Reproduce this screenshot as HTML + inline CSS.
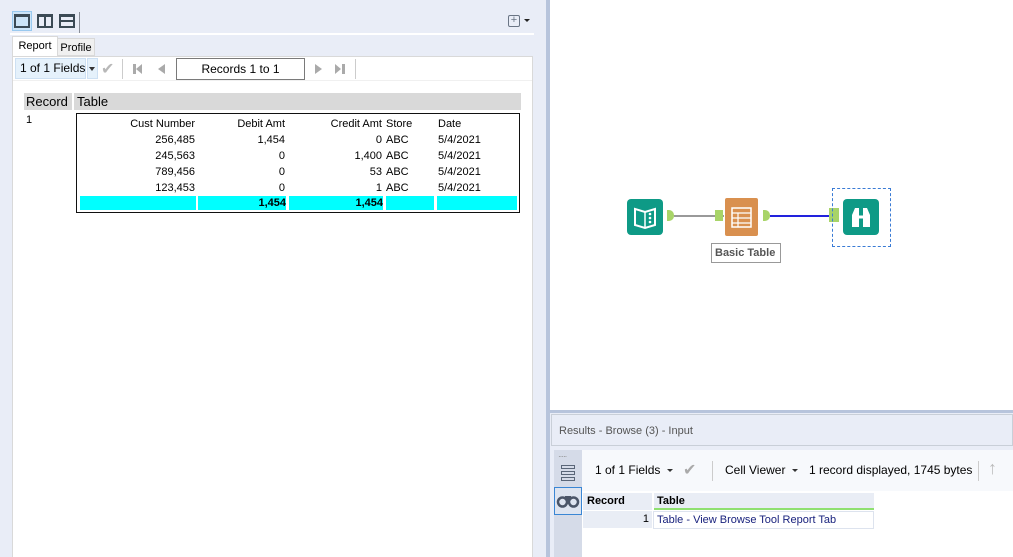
<!DOCTYPE html>
<html style="overflow:hidden;width:1013px;height:557px"><head><style>
body{margin:0;width:1013px;height:557px;overflow:hidden;background:#e9edf7;font-family:"Liberation Sans",sans-serif;font-size:12px;position:relative}
.a{position:absolute;white-space:nowrap}
.r{text-align:right}
</style></head><body>
<div class="a" style="left:12px;top:11px;width:20px;height:20px;background:#cce4f7;border:1px solid #99c9ef;box-sizing:border-box"></div>
<div class="a" style="left:14px;top:14px;width:16px;height:14px;border:2px solid #3b4a55;box-sizing:border-box;border-top-width:3px"></div>
<div class="a" style="left:37px;top:14px;width:16px;height:14px;border:2px solid #3b4a55;box-sizing:border-box;border-top-width:3px"></div>
<div class="a" style="left:44px;top:15px;width:2px;height:12px;background:#3b4a55"></div>
<div class="a" style="left:59px;top:14px;width:16px;height:14px;border:2px solid #3b4a55;box-sizing:border-box;border-top-width:3px"></div>
<div class="a" style="left:60px;top:20px;width:14px;height:2px;background:#3b4a55"></div>
<div class="a" style="left:79px;top:12px;width:1px;height:21px;background:#8a8f99"></div>
<div class="a" style="left:508px;top:15px;width:12px;height:12px;border:1.5px solid #6a7585;border-radius:2px;box-sizing:border-box;color:#6a7585;font-size:11px;line-height:9px;text-align:center">+</div>
<div class="a" style="left:524px;top:19px;border:3px solid transparent;border-top:3px solid #222"></div>
<div class="a" style="left:10px;top:33px;width:524px;height:2px;background:#fff"></div>
<div class="a" style="left:12px;top:36px;width:44px;height:20px;background:#fff;border:1px solid #d9d9d9;border-bottom:none;font-size:11px;line-height:18px;text-align:center">Report</div>
<div class="a" style="left:57px;top:38px;width:38px;height:18px;background:#f0f0f0;border:1px solid #d9d9d9;font-size:11px;line-height:18px;text-align:center;box-sizing:border-box">Profile</div>
<div class="a" style="left:12px;top:56px;width:521px;height:501px;background:#fff;border:1px solid #d9d9d9;border-bottom:none;box-sizing:border-box"></div>
<div class="a" style="left:15px;top:58px;width:71px;height:21px;background:#e5f1fb;border:1px solid #cde0f3;box-sizing:border-box;line-height:19px;padding-left:4px;font-size:12px">1 of 1 Fields</div>
<div class="a" style="left:87px;top:58px;width:11px;height:21px;background:#e5f1fb;border:1px solid #cde0f3;box-sizing:border-box"></div>
<div class="a" style="left:89px;top:67px;border:3.5px solid transparent;border-top:4px solid #333"></div>
<div class="a" style="left:101px;top:59px;color:#b8b8b8;font-size:16px">✔</div>
<div class="a" style="left:122px;top:59px;width:1px;height:20px;background:#ccc"></div>
<div class="a" style="left:133px;top:64px;width:3px;height:10px;background:#aaa"></div>
<div class="a" style="left:136px;top:64px;border:5px solid transparent;border-right:6px solid #aaa;border-left:0"></div>
<div class="a" style="left:158px;top:64px;border:5px solid transparent;border-right:7px solid #aaa;border-left:0"></div>
<div class="a" style="left:176px;top:58px;width:129px;height:22px;border:1px solid #7a7a7a;box-sizing:border-box;text-align:center;line-height:20px;font-size:12px">Records 1 to 1</div>
<div class="a" style="left:315px;top:64px;border:5px solid transparent;border-left:7px solid #aaa;border-right:0"></div>
<div class="a" style="left:335px;top:64px;border:5px solid transparent;border-left:6px solid #aaa;border-right:0"></div>
<div class="a" style="left:342px;top:64px;width:3px;height:10px;background:#aaa"></div>
<div class="a" style="left:355px;top:59px;width:1px;height:20px;background:#ccc"></div>
<div class="a" style="left:13px;top:80px;width:519px;height:1px;background:#f0f0f0"></div>
<div class="a" style="left:24px;top:93px;width:48px;height:17px;background:#d9d9d9;font-size:13px;line-height:17px;padding-left:2px;box-sizing:border-box">Record</div>
<div class="a" style="left:74px;top:93px;width:447px;height:17px;background:#d9d9d9;font-size:13px;line-height:17px;padding-left:3px;box-sizing:border-box">Table</div>
<div class="a" style="left:26px;top:114px;font-size:11px">1</div>
<div class="a" style="left:76px;top:113px;width:444px;height:100px;border:1.5px solid #111;box-sizing:border-box"></div>
<div class="a" style="font-size:11px;line-height:16px;left:0;top:116px">
<div class="a r" style="left:95px;width:100px">Cust Number<br>256,485<br>245,563<br>789,456<br>123,453</div>
<div class="a r" style="left:195px;width:90px">Debit Amt<br>1,454<br>0<br>0<br>0</div>
<div class="a r" style="left:285px;width:97px">Credit Amt<br>0<br>1,400<br>53<br>1</div>
<div class="a" style="left:386px;width:50px">Store<br>ABC<br>ABC<br>ABC<br>ABC</div>
<div class="a" style="left:438px;width:60px">Date<br>5/4/2021<br>5/4/2021<br>5/4/2021<br>5/4/2021</div>
</div>
<div class="a" style="left:80px;top:196px;width:116px;height:14px;background:#0ff"></div>
<div class="a r" style="left:198px;top:196px;width:88px;height:14px;background:#0ff;font-size:11px;font-weight:bold;line-height:14px">1,454</div>
<div class="a r" style="left:289px;top:196px;width:94px;height:14px;background:#0ff;font-size:11px;font-weight:bold;line-height:14px">1,454</div>
<div class="a" style="left:386px;top:196px;width:48px;height:14px;background:#0ff"></div>
<div class="a" style="left:437px;top:196px;width:80px;height:14px;background:#0ff"></div>
<div class="a" style="left:546px;top:0;width:4px;height:557px;background:#b7c4dc"></div>
<div class="a" style="left:550px;top:0;width:463px;height:410px;background:#fff"></div>
<div class="a" style="left:627px;top:199px;width:36px;height:36px;background:#0e9a86;border-radius:4px"></div>
<svg class="a" style="left:627px;top:199px" width="36" height="36"><path d="M8 10 L18 13 L28 10 L28 26 L18 29 L8 26Z" fill="none" stroke="#fff" stroke-width="2"/><path d="M18 13V29" stroke="#fff" stroke-width="1.5"/><circle cx="23" cy="15" r="1.3" fill="#fff"/><circle cx="23" cy="19" r="1.3" fill="#fff"/><circle cx="23" cy="23" r="1.3" fill="#fff"/></svg>
<div class="a" style="left:667px;top:210px;width:7px;height:11px;background:#a8d468;border-radius:0 5px 5px 0"></div>
<div class="a" style="left:674px;top:215px;width:50px;height:2px;background:#999"></div>
<div class="a" style="left:715px;top:210px;width:8px;height:11px;background:#a8d468"></div>
<div class="a" style="left:725px;top:198px;width:33px;height:38px;background:#d9904f;border-radius:2px"></div>
<svg class="a" style="left:725px;top:198px" width="33" height="38"><rect x="7" y="10" width="19" height="19" fill="none" stroke="#fff" stroke-width="1.5"/><path d="M7 15H26M7 20H26M7 25H26M13 15V29" stroke="#fff" stroke-width="1.2"/></svg>
<div class="a" style="left:763px;top:210px;width:7px;height:11px;background:#a8d468;border-radius:0 5px 5px 0"></div>
<div class="a" style="left:770px;top:215px;width:62px;height:2px;background:#2222dd"></div>
<div class="a" style="left:829px;top:208px;width:10px;height:14px;background:#a8d468"></div>
<div class="a" style="left:832px;top:188px;width:59px;height:59px;border:1px dashed #3a7bd5;box-sizing:border-box"></div>
<div class="a" style="left:843px;top:199px;width:36px;height:36px;background:#0e9a86;border-radius:4px"></div>
<svg class="a" style="left:843px;top:199px" width="36" height="36"><path d="M9 28V16L12 9H16V28ZM20 28V9H24L27 16V28Z" fill="#fff"/><path d="M16 18H20" stroke="#fff" stroke-width="3"/></svg>
<div class="a" style="left:711px;top:243px;width:70px;height:20px;border:1px solid #999;background:#fff;box-sizing:border-box;font-size:11px;font-weight:bold;color:#555;line-height:18px;padding-left:3px">Basic Table</div>
<div class="a" style="left:550px;top:410px;width:463px;height:3px;background:#b7c4dc"></div>
<div class="a" style="left:551px;top:414px;width:462px;height:32px;border:1px solid #c9cfd8;box-sizing:border-box;background:#e9edf7;font-size:11px;color:#555;line-height:32px;padding-left:7px">Results - Browse (3) - Input</div>
<div class="a" style="left:554px;top:450px;width:28px;height:107px;background:#d5dbe8"></div>
<div class="a" style="left:558px;top:452px;font-size:8px;color:#888;letter-spacing:-1px">·····</div>
<div class="a" style="left:561px;top:465px;width:14px;height:4px;border:1.5px solid #5a6678;box-sizing:border-box"></div>
<div class="a" style="left:561px;top:471px;width:14px;height:4px;border:1.5px solid #5a6678;box-sizing:border-box"></div>
<div class="a" style="left:561px;top:477px;width:14px;height:4px;border:1.5px solid #5a6678;box-sizing:border-box"></div>
<div class="a" style="left:554px;top:487px;width:28px;height:28px;border:1px solid #3a86d4;box-sizing:border-box;background:#dde4f0"></div>
<svg class="a" style="left:556px;top:492px" width="24" height="16"><circle cx="6.5" cy="10" r="4.5" fill="none" stroke="#4a5568" stroke-width="2.5"/><circle cx="17.5" cy="10" r="4.5" fill="none" stroke="#4a5568" stroke-width="2.5"/><rect x="9" y="4" width="6" height="4" fill="#4a5568"/></svg>
<div class="a" style="left:582px;top:450px;width:431px;height:41px;background:#f7f9fc"></div>
<div class="a" style="left:582px;top:491px;width:431px;height:66px;background:#fff"></div>
<div class="a" style="left:595px;top:463px;font-size:12px">1 of 1 Fields</div>
<div class="a" style="left:667px;top:469px;border:3px solid transparent;border-top:3px solid #333"></div>
<div class="a" style="left:683px;top:460px;color:#aaa;font-size:16px">✔</div>
<div class="a" style="left:712px;top:461px;width:1px;height:20px;background:#ccc"></div>
<div class="a" style="left:725px;top:463px;font-size:12px">Cell Viewer</div>
<div class="a" style="left:792px;top:469px;border:3px solid transparent;border-top:3px solid #333"></div>
<div class="a" style="left:809px;top:463px;font-size:12px">1 record displayed, 1745 bytes</div>
<div class="a" style="left:978px;top:461px;width:1px;height:20px;background:#ccc"></div>
<div class="a" style="left:988px;top:458px;color:#bbb;font-size:18px">↑</div>
<div class="a" style="left:583px;top:493px;width:69px;height:17px;background:#e9edf5;font-size:11px;font-weight:bold;line-height:17px;padding-left:4px;box-sizing:border-box">Record</div>
<div class="a" style="left:654px;top:493px;width:220px;height:17px;background:#e9edf5;font-size:11px;font-weight:bold;line-height:16px;padding-left:3px;box-sizing:border-box;border-bottom:2px solid #8fe070">Table</div>
<div class="a r" style="left:583px;top:511px;width:69px;height:17px;background:#e9edf5;font-size:11px;line-height:17px;padding-right:3px;box-sizing:border-box">1</div>
<div class="a" style="left:653px;top:511px;width:221px;height:18px;border:1px solid #dde3ee;box-sizing:border-box;font-size:11px;line-height:16px;padding-left:3px;color:#1a237e">Table - View Browse Tool Report Tab</div>
</body></html>
